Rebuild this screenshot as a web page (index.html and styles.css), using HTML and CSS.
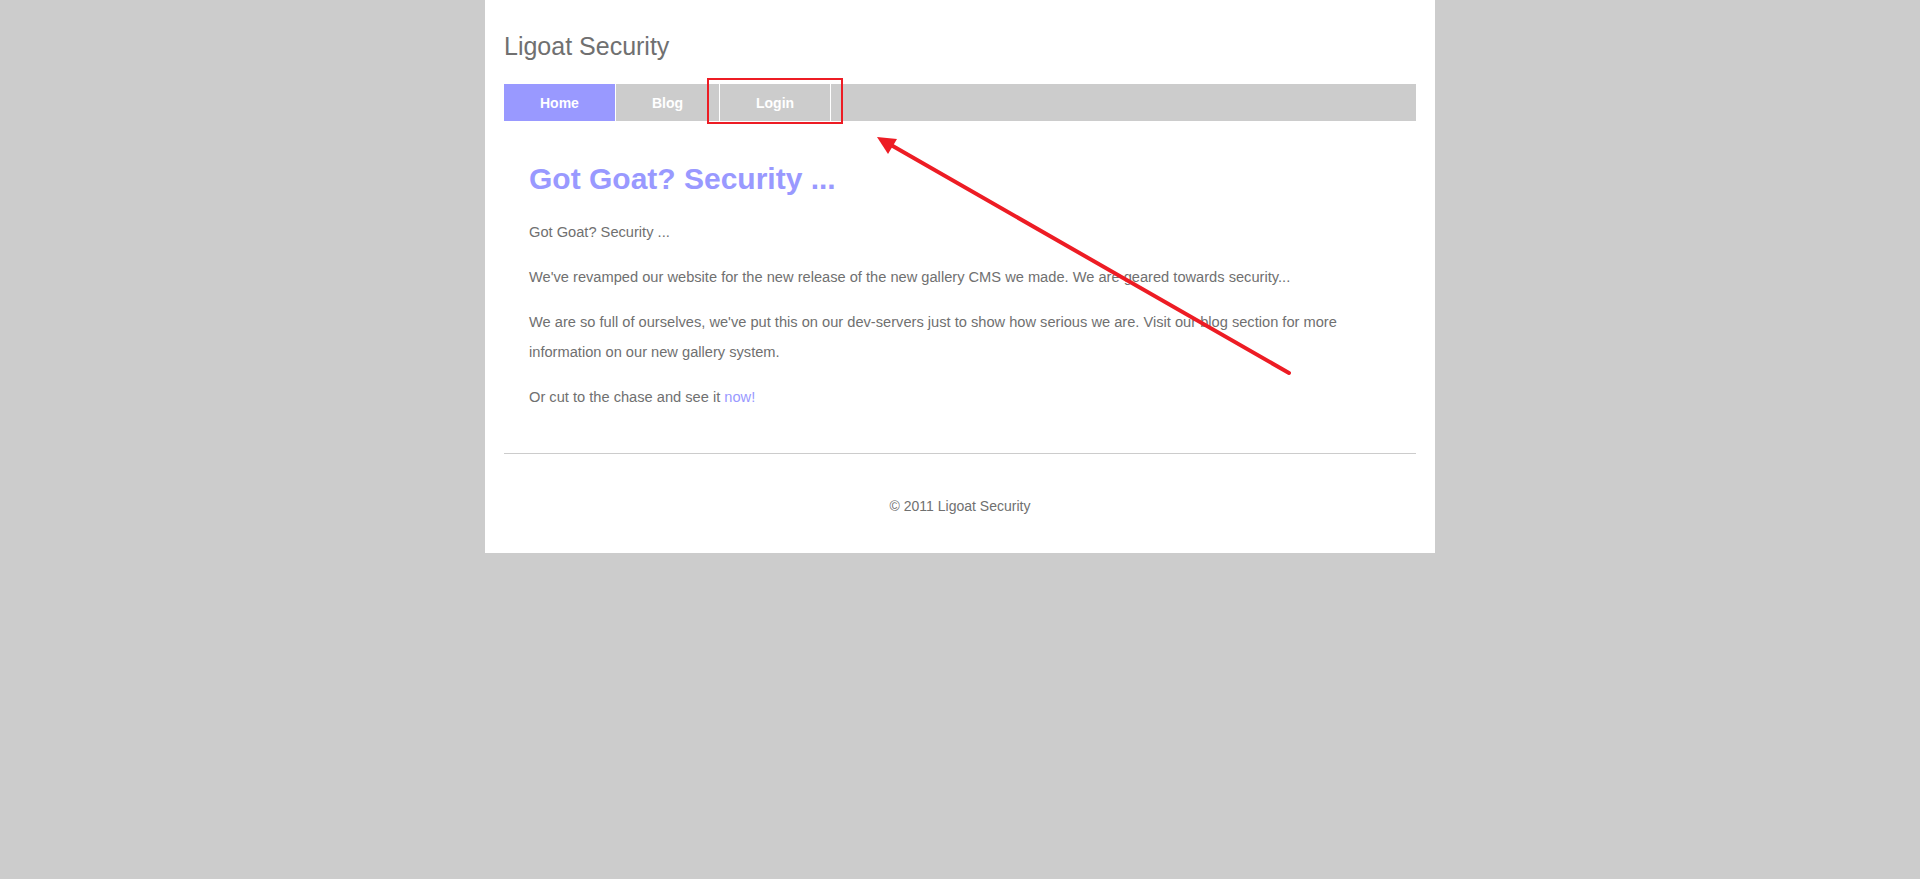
FILE: index.html
```html
<html>
<head>
<title>Ligoat Security</title>
<link rel="stylesheet" href="styles.css">
</head>
<body>

<div id="wrapper">
  <div id="header"><h1>Ligoat Security</h1></div>

  <ul id="menu">
    <li class="current"><a href="#">Home</a></li>
    <li><a href="#">Blog</a></li>
    <li><a href="#">Login</a></li>
  </ul>

  <div id="content">
    <h2>Got Goat? Security ...</h2>
    <p>Got Goat? Security ...</p>
    <p>We've revamped our website for the new release of the new gallery CMS we made. We are geared towards security...</p>
    <p>We are so full of ourselves, we've put this on our dev-servers just to show how serious we are. Visit our blog section for more information on our new gallery system.</p>
    <p>Or cut to the chase and see it <a href="#">now!</a></p>
  </div>

  <div id="footer">&copy; 2011 Ligoat Security</div>

  <!-- annotation drawn over the page -->
  <div class="mark-box"></div>
  <svg class="mark-arrow" width="950" height="552" viewBox="0 0 950 552">
    <line x1="804" y1="373" x2="406" y2="145" stroke="#ed1c24" stroke-width="4" stroke-linecap="round" />
    <polygon points="392,137 412,139 403,154" fill="#ed1c24" />
  </svg>
</div>

</body>
</html>
```

FILE: styles.css
```css
body { margin:0; background:#cccccc; font-family:"Liberation Sans", Arial, sans-serif; font-size:14px; color:#707070; }
#wrapper { position:relative; width:912px; margin:0 auto; padding:0 19px 32px; background:#fff; }
#header { padding-top:31px; margin-bottom:23px; }
#header h1 { margin:0; font-size:25px; font-weight:normal; line-height:30px; color:#707070; }
#menu { display:flex; margin:0; padding:0; list-style:none; background:#cccccc; height:37px; }
#menu li a { display:block; padding:1px 36px 0; line-height:36px; border-right:1px solid #fff; color:#fff; font-weight:bold; text-decoration:none; }
#menu li.current a { background:#9999ff; }
#content { padding:40px 25px 26px; border-bottom:1px solid #cccccc; }
#content h2 { margin:0 0 20px; font-size:30px; line-height:36px; color:#9999ff; }
#content p { margin:0 0 15px; font-size:14.65px; line-height:30px; }
#content a { color:#9999ff; text-decoration:none; }
#footer { padding-top:37px; text-align:center; line-height:30px; }
.mark-box { position:absolute; left:222px; top:78px; width:132px; height:42px; border:2px solid #ed1c24; }
.mark-arrow { position:absolute; left:0; top:0; pointer-events:none; }
```
